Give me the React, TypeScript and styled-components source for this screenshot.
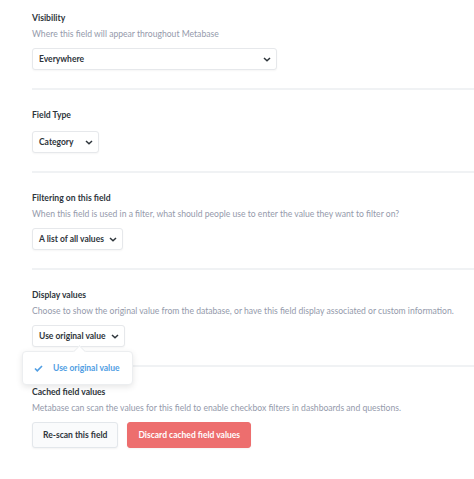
import { createGlobalStyle } from 'styled-components'
import styled from 'styled-components'

const GlobalStyle = createGlobalStyle`
  body {
    margin: 0;
    background: #fff;
    font-family: Lato, "Noto Sans", sans-serif;
    color: #2e353b;
  }
`

const Page = styled.main`
  padding-left: 32px;
`

const Section = styled.section<{ $first?: boolean }>`
  padding: ${(p) => (p.$first ? '12px' : '19px')} 0 18px;
  border-top: ${(p) => (p.$first ? 'none' : '2px solid #f0f2f4')};
  position: relative;
`

const Label = styled.div<{ $gap?: number }>`
  font-size: 8.6px;
  font-weight: 700;
  line-height: 12px;
  color: #2e353b;
  margin-bottom: ${(p) => p.$gap ?? 4}px;
`

const Description = styled.div`
  font-size: 8.6px;
  line-height: 12px;
  color: #949aab;
  margin-bottom: 8px;
  white-space: nowrap;
`

const Select = styled.div<{ $width?: number }>`
  box-sizing: border-box;
  width: ${(p) => (p.$width ? `${p.$width}px` : 'auto')};
  height: 22px;
  display: inline-flex;
  align-items: center;
  justify-content: space-between;
  gap: 5px;
  padding: 0 5px 0 6px;
  border: 1px solid #e6e8eb;
  border-radius: 3px;
  box-shadow: 0 1px 2px rgba(0, 0, 0, 0.04);
  font-size: 8.5px;
  font-weight: 700;
  color: #2e353b;
  background: #fff;
  white-space: nowrap;
  vertical-align: top;
`

const Chevron = () => (
  <svg width="8" height="5" viewBox="0 0 8 5" fill="none">
    <path d="M1 1l3 2.8L7 1" stroke="#2e353b" strokeWidth="1.5" />
  </svg>
)

const Popover = styled.div`
  position: absolute;
  left: -10px;
  top: 81px;
  width: 111px;
  height: 34px;
  box-sizing: border-box;
  background: #fff;
  border: 1px solid #eceef0;
  border-radius: 4px;
  box-shadow: 0 2px 6px rgba(0, 0, 0, 0.1);
  display: flex;
  align-items: center;
  gap: 10px;
  padding-left: 11px;
  z-index: 2;

  &::before {
    content: '';
    position: absolute;
    top: -5px;
    left: 52px;
    width: 8px;
    height: 8px;
    background: #fff;
    border-left: 1px solid #eceef0;
    border-top: 1px solid #eceef0;
    transform: rotate(45deg);
  }
`

const OptionText = styled.span`
  font-size: 8.5px;
  font-weight: 700;
  color: #509ee3;
`

const Buttons = styled.div`
  display: flex;
  gap: 9px;
`

const Button = styled.button<{ $danger?: boolean }>`
  height: 26px;
  padding: 0 10px;
  font-family: inherit;
  font-size: 8.5px;
  font-weight: 700;
  border-radius: 3px;
  border: 1px solid ${(p) => (p.$danger ? '#ed6e6e' : '#e3e7eb')};
  background: ${(p) => (p.$danger ? '#ed6e6e' : '#fafbfc')};
  color: ${(p) => (p.$danger ? '#fff' : '#2e353b')};
  box-shadow: 0 1px 2px rgba(0, 0, 0, 0.05);
`

function App() {
  return (
    <Page>
      <GlobalStyle />
      <Section $first>
        <Label>Visibility</Label>
        <Description>Where this field will appear throughout Metabase</Description>
        <Select $width={245}>
          Everywhere <Chevron />
        </Select>
      </Section>
      <Section>
        <Label $gap={10}>Field Type</Label>
        <Select $width={67}>
          Category <Chevron />
        </Select>
      </Section>
      <Section>
        <Label>Filtering on this field</Label>
        <Description>
          When this field is used in a filter, what should people use to enter the value they want to filter on?
        </Description>
        <Select>
          A list of all values <Chevron />
        </Select>
      </Section>
      <Section>
        <Label>Display values</Label>
        <Description>
          Choose to show the original value from the database, or have this field display associated or custom information.
        </Description>
        <Select>
          Use original value <Chevron />
        </Select>
        <Popover>
          <svg width="9" height="7" viewBox="0 0 9 7" fill="none">
            <path d="M1 3.5l2.3 2.3L8 1" stroke="#509ee3" strokeWidth="1.6" />
          </svg>
          <OptionText>Use original value</OptionText>
        </Popover>
      </Section>
      <Section>
        <Label>Cached field values</Label>
        <Description>
          Metabase can scan the values for this field to enable checkbox filters in dashboards and questions.
        </Description>
        <Buttons>
          <Button>Re-scan this field</Button>
          <Button $danger>Discard cached field values</Button>
        </Buttons>
      </Section>
    </Page>
  )
}

export default App
